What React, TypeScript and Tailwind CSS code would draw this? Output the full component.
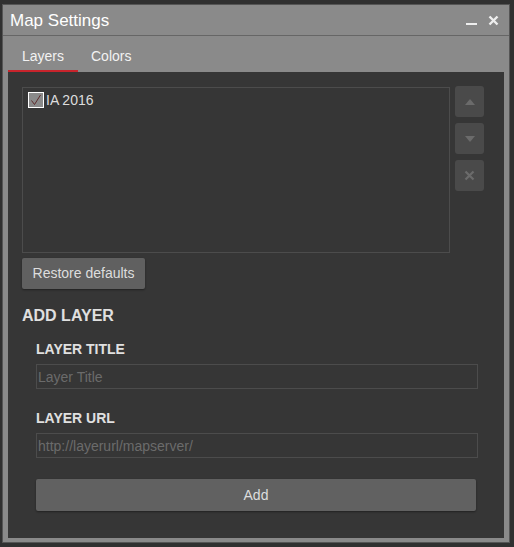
import React from "react";

const font = { fontFamily: '"Liberation Sans", Arial, sans-serif' };

function SideButton({ children }: { children: React.ReactNode }) {
  return (
    <button className="w-[29px] h-[31px] rounded-[3px] bg-[#4a4a4a] flex items-center justify-center">
      {children}
    </button>
  );
}

export default function App() {
  return (
    <div className="w-[514px] h-[547px] bg-[#303030] pt-[4px] pl-[2px]" style={font}>
      <div className="w-[508px] h-[539px] border border-[#555] bg-[#8a8a8a] flex flex-col">
        {/* title bar */}
        <div className="h-[31px] flex items-center justify-between pl-[7px] pr-[10px] border-b border-[#666]">
          <span className="text-[17px] text-white leading-none">Map Settings</span>
          <div className="flex items-center gap-[11px]">
            <svg width="11" height="12" viewBox="0 0 11 12">
              <rect x="0" y="9" width="11" height="2" fill="#eeeeee" />
            </svg>
            <svg width="11" height="11" viewBox="0 0 11 11">
              <path d="M1.5 1.5 L9.5 9.5 M9.5 1.5 L1.5 9.5" stroke="#eeeeee" strokeWidth="2.4" />
            </svg>
          </div>
        </div>

        {/* tabs */}
        <div className="h-[36px] flex px-[5px]">
          <div className="w-[70px] flex items-center justify-center border-b-2 border-[#c8242c] pt-[7px] text-[14px] text-[#f2f2f2]">
            Layers
          </div>
          <div className="pl-[13px] flex items-center pt-[5px] text-[14px] text-[#f2f2f2]">Colors</div>
        </div>

        {/* content */}
        <div className="flex-1 mx-[5px] mb-[4px] bg-[#363636] px-[14px] pt-[15px]">
          <div className="flex gap-[5px]">
            <div className="w-[428px] h-[166px] border border-[#4c4c4c] pl-[5px] pt-[4px]">
              <div className="flex items-center gap-[2px]">
                <span className="w-[16px] h-[16px] border border-white bg-[#8a8a8a] flex items-center justify-center">
                  <svg width="14" height="14" viewBox="0 0 14 14">
                    <path d="M2.5 7.5 L5.5 11.5 L11.5 2" stroke="#5e2c2c" strokeWidth="1" fill="none" />
                  </svg>
                </span>
                <span className="text-[14px] text-[#dddddd] leading-[16px]">IA 2016</span>
              </div>
            </div>
            <div className="flex flex-col gap-[6px] -mt-[1px]">
              <SideButton>
                <svg width="10" height="6" viewBox="0 0 10 6">
                  <path d="M5 0 L10 6 L0 6 Z" fill="#6b6b6b" />
                </svg>
              </SideButton>
              <SideButton>
                <svg width="10" height="6" viewBox="0 0 10 6">
                  <path d="M0 0 L10 0 L5 6 Z" fill="#6b6b6b" />
                </svg>
              </SideButton>
              <SideButton>
                <svg width="11" height="11" viewBox="0 0 11 11">
                  <path d="M1.5 1.5 L9.5 9.5 M9.5 1.5 L1.5 9.5" stroke="#6b6b6b" strokeWidth="2.2" />
                </svg>
              </SideButton>
            </div>
          </div>

          <button className="mt-[5px] h-[31px] w-[123px] rounded-[2px] bg-[#606060] text-[14px] text-[#dddddd] shadow-[0_1px_2px_rgba(0,0,0,0.4)]">
            Restore defaults
          </button>

          <div className="mt-[18px] text-[16px] leading-[18px] font-bold text-[#e0e0e0]">ADD LAYER</div>

          <div className="pl-[14px]">
            <div className="mt-[16px] text-[14px] leading-[16px] font-bold text-[#e0e0e0]">LAYER TITLE</div>
            <input
              className="mt-[7px] block w-[442px] h-[25px] border border-[#4c4c4c] bg-transparent px-[1px] text-[14px] text-[#dddddd] placeholder:text-[#6b6b6b] outline-none"
              placeholder="Layer Title"
            />

            <div className="mt-[21px] text-[14px] leading-[16px] font-bold text-[#e0e0e0]">LAYER URL</div>
            <input
              className="mt-[7px] block w-[442px] h-[25px] border border-[#4c4c4c] bg-transparent px-[1px] text-[14px] text-[#dddddd] placeholder:text-[#6b6b6b] outline-none"
              placeholder="http://layerurl/mapserver/"
            />

            <button className="mt-[21px] block w-[440px] h-[32px] rounded-[2px] bg-[#616161] text-[14px] text-[#dddddd] shadow-[0_1px_2px_rgba(0,0,0,0.4)]">
              Add
            </button>
          </div>
        </div>
      </div>
    </div>
  );
}
